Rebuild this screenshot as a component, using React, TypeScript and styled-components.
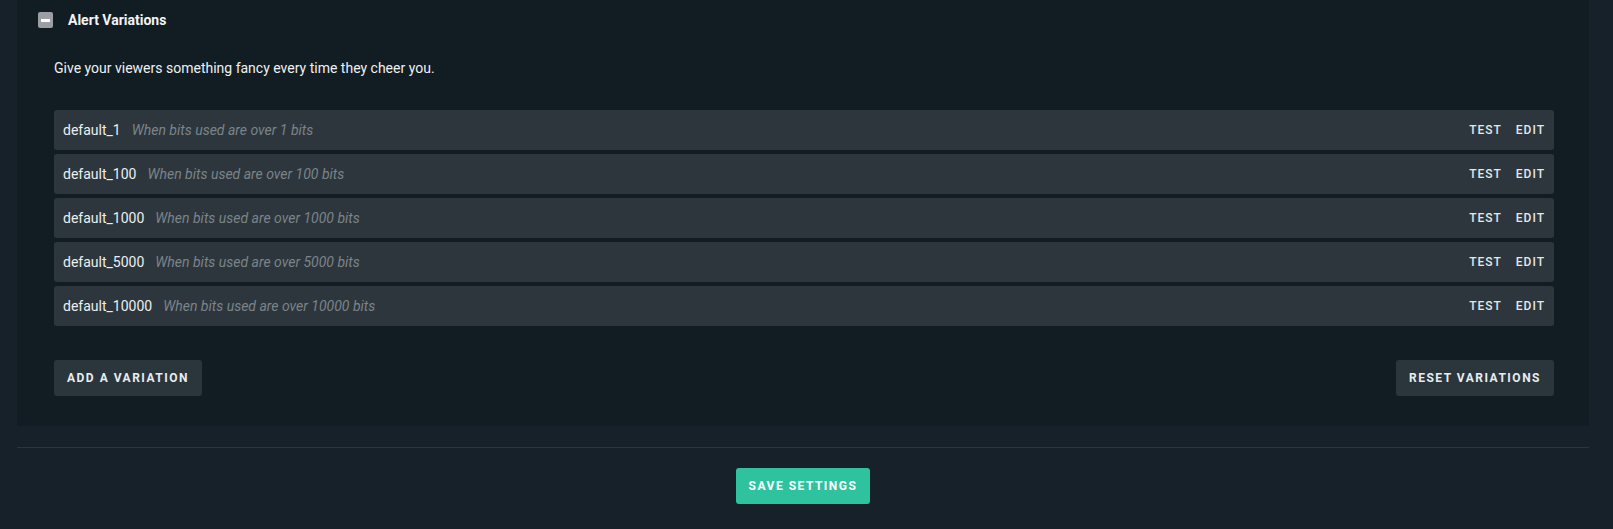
import styled, { createGlobalStyle } from "styled-components";

const GlobalStyle = createGlobalStyle`
  html, body {
    margin: 0;
    padding: 0;
    background: #17212a;
    font-family: Roboto, "Liberation Sans", sans-serif;
  }
`;

const Page = styled.div`
  padding: 0 24px 0 17px;
`;

const Panel = styled.section`
  background: #121c23;
  padding: 0 35px 30px 21px;
`;

const Header = styled.div`
  display: flex;
  align-items: center;
  height: 40px;
  gap: 15px;
`;

const Toggle = styled.span`
  width: 15px;
  height: 16px;
  border-radius: 2px;
  background: #9b9ea2;
  display: flex;
  align-items: center;
  justify-content: center;
  &::after {
    content: "";
    width: 9px;
    height: 3px;
    background: #ffffff;
  }
`;

const Title = styled.h3`
  margin: 0;
  font-size: 14px;
  font-weight: 700;
  color: #f2f4f5;
`;

const Body = styled.div`
  padding-left: 16px;
`;

const Description = styled.p`
  margin: 18px 0 0;
  font-size: 14px;
  line-height: 20px;
  color: #eef1f2;
`;

const List = styled.div`
  display: flex;
  flex-direction: column;
  gap: 4px;
  margin-top: 32px;
`;

const Row = styled.div`
  display: flex;
  align-items: center;
  height: 40px;
  padding: 0 9px 0 9px;
  border-radius: 3px;
  background: #2d363d;
`;

const Name = styled.span`
  font-size: 14px;
  color: #eceff0;
`;

const Hint = styled.span`
  margin-left: 11px;
  font-size: 14px;
  font-style: italic;
  color: #7b8489;
  flex: 1;
`;

const RowAction = styled.button`
  background: none;
  border: 0;
  padding: 0;
  margin-left: 14px;
  font-family: inherit;
  font-size: 12px;
  font-weight: 500;
  letter-spacing: 1px;
  color: #e3e8ea;
  cursor: pointer;
`;

const Actions = styled.div`
  display: flex;
  justify-content: space-between;
  margin-top: 34px;
`;

const Button = styled.button<{ $primary?: boolean }>`
  height: 36px;
  padding: 0 13px;
  border: 0;
  border-radius: 3px;
  background: ${(p) => (p.$primary ? "#2fc29f" : "#2b353c")};
  color: ${(p) => (p.$primary ? "#ffffff" : "#e8edef")};
  font-family: inherit;
  font-size: 12px;
  font-weight: 700;
  letter-spacing: 1.5px;
  text-transform: uppercase;
  cursor: pointer;
`;

const Divider = styled.hr`
  margin: 21px 0 0;
  border: 0;
  height: 1px;
  background: #2b363e;
`;

const Footer = styled.div`
  display: flex;
  justify-content: center;
  padding: 20px 0 24px;
`;

const variations = [
  { name: "default_1", amount: 1 },
  { name: "default_100", amount: 100 },
  { name: "default_1000", amount: 1000 },
  { name: "default_5000", amount: 5000 },
  { name: "default_10000", amount: 10000 }
];

export default function App() {
  return (
    <Page>
      <GlobalStyle />
      <Panel>
        <Header>
          <Toggle />
          <Title>Alert Variations</Title>
        </Header>
        <Body>
          <Description>Give your viewers something fancy every time they cheer you.</Description>
          <List>
            {variations.map((v) => (
              <Row key={v.name}>
                <Name>{v.name}</Name>
                <Hint>When bits used are over {v.amount} bits</Hint>
                <RowAction>TEST</RowAction>
                <RowAction>EDIT</RowAction>
              </Row>
            ))}
          </List>
          <Actions>
            <Button>Add a Variation</Button>
            <Button>Reset Variations</Button>
          </Actions>
        </Body>
      </Panel>
      <Divider />
      <Footer>
        <Button $primary>Save Settings</Button>
      </Footer>
    </Page>
  );
}
